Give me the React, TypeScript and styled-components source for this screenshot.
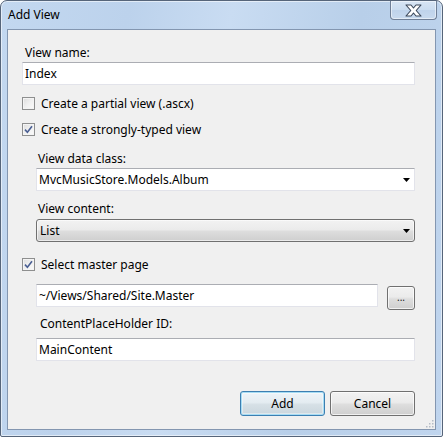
import React from "react";
import styled, { createGlobalStyle } from "styled-components";

const GlobalStyle = createGlobalStyle`
  html, body {
    margin: 0;
    padding: 0;
    background: #ffffff;
  }
  body {
    font-family: "Noto Sans", "Open Sans", "Liberation Sans", sans-serif;
    font-size: 12px;
    color: #000;
  }
`;

const CloseIcon = () => (
  <svg width="17" height="13" viewBox="0 0 17 13">
    <polygon
      points="1,1 6,1 8.5,4 11,1 16,1 11.2,6.5 16,12 11,12 8.5,9 6,12 1,12 5.8,6.5"
      fill="#ffffff"
      stroke="#3a4658"
      strokeWidth="1.1"
      strokeLinejoin="round"
    />
  </svg>
);

const CheckMark = () => (
  <svg width="9" height="9" viewBox="0 0 9 9">
    <path d="M1 4.6 L3.4 7.2 L8 1.2" fill="none" stroke="#4a5f93" strokeWidth="1.6" />
  </svg>
);

const Arrow = () => (
  <svg width="7" height="4" viewBox="0 0 7 4">
    <polygon points="0,0 7,0 3.5,4" fill="#000" />
  </svg>
);

const Grip = () => (
  <svg width="10" height="10" viewBox="0 0 10 10">
    {[
      [8, 2],
      [8, 5],
      [5, 5],
      [8, 8],
      [5, 8],
      [2, 8],
    ].map(([x, y]) => (
      <rect key={`${x}-${y}`} x={x} y={y} width="1.5" height="1.5" fill="#b5bcc6" />
    ))}
  </svg>
);

const CheckRow = ({ checked, children, top }: { checked?: boolean; children: React.ReactNode; top: number }) => (
  <Row top={top}>
    <Box>{checked && <CheckMark />}</Box>
    <span>{children}</span>
  </Row>
);

const App = () => {
  return (
    <>
      <GlobalStyle />
      <Window>
        <TitleBar>
          <Title>Add View</Title>
          <CloseButton>
            <CloseIcon />
          </CloseButton>
        </TitleBar>
        <Client>
          <Label top={15} indent={3}>View name:</Label>
          <TextBox top={2}>Index</TextBox>

          <CheckRow top={11}>Create a partial view (.ascx)</CheckRow>
          <CheckRow top={11} checked>
            Create a strongly-typed view
          </CheckRow>

          <Indented>
            <Label top={14} indent={2}>View data class:</Label>
            <TextBox top={2}>
              MvcMusicStore.Models.Album
              <ArrowSlot>
                <Arrow />
              </ArrowSlot>
            </TextBox>

            <Label top={10} indent={2}>View content:</Label>
            <DropList>
              List
              <ArrowSlot>
                <Arrow />
              </ArrowSlot>
            </DropList>
          </Indented>

          <CheckRow top={15} checked>
            Select master page
          </CheckRow>

          <Indented>
            <BrowseRow>
              <TextBox top={0} grow>
                ~/Views/Shared/Site.Master
              </TextBox>
              <BrowseButton>...</BrowseButton>
            </BrowseRow>
            <Label top={6} indent={4}>ContentPlaceHolder ID:</Label>
            <TextBox top={7}>MainContent</TextBox>
          </Indented>

          <Buttons>
            <PushButton primary>Add</PushButton>
            <PushButton>Cancel</PushButton>
          </Buttons>

          <GripSlot>
            <Grip />
          </GripSlot>
        </Client>
      </Window>
    </>
  );
};

export default App;

const Window = styled.div`
  width: 443px;
  height: 437px;
  box-sizing: border-box;
  border: 1px solid #56657a;
  border-radius: 7px 7px 2px 2px;
  padding: 0 6px 6px 6px;
  display: flex;
  flex-direction: column;
  background: linear-gradient(100deg, #c3d8f0 0%, #bcd2ec 25%, #c9dcf2 45%, #b8cfe9 70%, #c0d5ee 100%);
  box-shadow: inset 0 0 0 1px rgba(255, 255, 255, 0.55);
`;

const TitleBar = styled.div`
  height: 28px;
  display: flex;
  align-items: flex-start;
  justify-content: space-between;
`;

const Title = styled.div`
  padding: 6px 0 0 1px;
  font-size: 12px;
  line-height: 16px;
  color: #000;
`;

const CloseButton = styled.div`
  width: 47px;
  height: 19px;
  margin-right: -1px;
  box-sizing: border-box;
  border: 1px solid #6f7f97;
  border-top: none;
  border-radius: 0 0 4px 4px;
  display: flex;
  align-items: center;
  justify-content: center;
  background: linear-gradient(#d8e5f4 0%, #cadcf0 50%, #bfd3eb 51%, #c8daef 100%);
  box-shadow: inset 0 0 0 1px rgba(255, 255, 255, 0.5);
`;

const Client = styled.div`
  position: relative;
  flex: 1;
  border: 1px solid #8396b0;
  background: #f0f0f0;
  padding: 0 20px 0 14px;
  display: flex;
  flex-direction: column;
`;

const Label = styled.div<{ top: number; indent: number }>`
  margin-top: ${({ top }) => top}px;
  padding-left: ${({ indent }) => indent}px;
  line-height: 15px;
  height: 15px;
`;

const TextBox = styled.div<{ top: number; grow?: boolean }>`
  position: relative;
  margin-top: ${({ top }) => top}px;
  flex: ${({ grow }) => (grow ? 1 : "none")};
  height: 23px;
  box-sizing: border-box;
  border: 1px solid #e2e3ea;
  border-top-color: #abadb3;
  background: #fff;
  padding: 0 0 0 2px;
  display: flex;
  align-items: center;
  line-height: 15px;
`;

const ArrowSlot = styled.span`
  position: absolute;
  right: 4px;
  top: 50%;
  margin-top: -2px;
  display: flex;
`;

const DropList = styled.div`
  position: relative;
  margin-top: 3px;
  height: 23px;
  box-sizing: border-box;
  border: 1px solid #707070;
  border-radius: 3px;
  padding-left: 3px;
  display: flex;
  align-items: center;
  background: linear-gradient(#f2f2f2 0%, #ebebeb 45%, #dddddd 55%, #cfcfcf 100%);
  box-shadow: inset 0 0 0 1px rgba(255, 255, 255, 0.6);
`;

const Row = styled.div<{ top: number }>`
  margin-top: ${({ top }) => top}px;
  height: 15px;
  display: flex;
  align-items: center;
  gap: 6px;
  line-height: 15px;
`;

const Box = styled.span`
  width: 13px;
  height: 13px;
  box-sizing: border-box;
  border: 1px solid #8e8f8f;
  display: flex;
  align-items: center;
  justify-content: center;
  background: linear-gradient(135deg, #dcdcdc 0%, #f0f0f0 50%, #fbfbfb 100%);
  box-shadow: inset 0 0 0 1px #f4f4f4;
`;

const Indented = styled.div`
  padding-left: 14px;
  display: flex;
  flex-direction: column;
`;

const BrowseRow = styled.div`
  margin-top: 12px;
  display: flex;
  align-items: flex-start;
  gap: 9px;
`;

const BrowseButton = styled.div`
  margin-top: 2px;
  width: 28px;
  height: 24px;
  flex: none;
  box-sizing: border-box;
  border: 1px solid #707070;
  border-radius: 3px;
  display: flex;
  align-items: center;
  justify-content: center;
  font-size: 10px;
  padding-bottom: 3px;
  color: #222;
  background: linear-gradient(#f2f2f2 0%, #ebebeb 45%, #dddddd 55%, #cfcfcf 100%);
  box-shadow: inset 0 0 0 1px rgba(255, 255, 255, 0.7);
`;

const Buttons = styled.div`
  margin-top: 30px;
  display: flex;
  justify-content: flex-end;
  gap: 5px;
`;

const PushButton = styled.div<{ primary?: boolean }>`
  width: 85px;
  height: 25px;
  box-sizing: border-box;
  border: 1px solid ${({ primary }) => (primary ? "#3c7fb1" : "#707070")};
  border-radius: 3px;
  display: flex;
  align-items: center;
  justify-content: center;
  line-height: 15px;
  background: ${({ primary }) =>
    primary
      ? "linear-gradient(#eef4f8 0%, #e4ecf1 45%, #d6e0e6 55%, #cad6dd 100%)"
      : "linear-gradient(#f2f2f2 0%, #ebebeb 45%, #dddddd 55%, #cfcfcf 100%)"};
  box-shadow: ${({ primary }) =>
    primary ? "inset 0 0 0 1px #a6dcf4, inset 0 0 0 2px rgba(255,255,255,0.4)" : "inset 0 0 0 1px rgba(255, 255, 255, 0.7)"};
`;

const GripSlot = styled.div`
  position: absolute;
  right: 1px;
  bottom: 1px;
  display: flex;
`;
